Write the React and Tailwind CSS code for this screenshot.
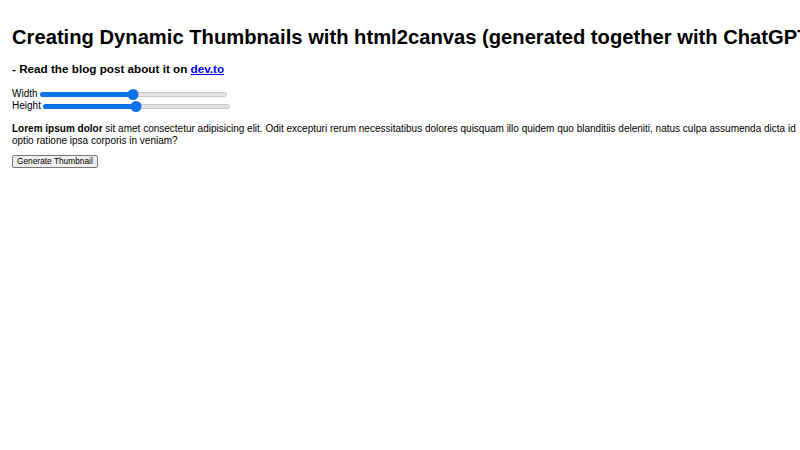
import React, { useState } from "react";

const Slider = ({ value, width }) => (
    <div className="relative h-[12px] flex items-center ml-[2px]" style={{ width }}>
        <div className="w-full h-[5px] rounded-full bg-[#e5e5e5] border border-[#c8c8c8]" />
        <div className="absolute left-0 h-[5px] rounded-full bg-[#0b72e7]" style={{ width: `${value}%` }} />
        <div
            className="absolute w-[11px] h-[11px] rounded-full bg-[#0b72e7] -translate-x-1/2"
            style={{ left: `${value}%` }}
        />
    </div>
);

export default function App() {
    const [width] = useState(50);
    const [height] = useState(50);

    return (
        <div className="min-h-screen bg-white text-black pl-[12px] pr-[2px] font-['Liberation_Sans',Arial,sans-serif] text-[10px] leading-[12px] overflow-hidden">
            <h1 className="pt-[25px] text-[20.2px] leading-[24px] font-bold whitespace-nowrap">
                Creating Dynamic Thumbnails with html2canvas (generated together with ChatGPT)
            </h1>
            <h3 className="mt-[12px] text-[11.7px] leading-[16px] font-bold">
                - Read the blog post about it on{" "}
                <a href="#" className="text-[#0000ee] underline">dev.to</a>
            </h3>

            <div className="mt-[11px]">
                <div className="flex items-center h-[12px]">
                    <span>Width</span>
                    <Slider value={width} width={187} />
                </div>
                <div className="flex items-center h-[12px]">
                    <span>Height</span>
                    <Slider value={height} width={187} />
                </div>
            </div>

            <p className="mt-[11px]">
                <b>Lorem ipsum dolor</b> sit amet consectetur adipisicing elit. Odit excepturi rerum necessitatibus dolores quisquam illo quidem quo blanditiis deleniti, natus culpa assumenda dicta id optio ratione ipsa corporis in veniam?
            </p>

            <button className="mt-[8px] px-[4px] h-[13px] leading-[11px] text-[8.33px] bg-[#efefef] border border-[#767676] rounded-[2px]">
                Generate Thumbnail
            </button>
        </div>
    );
}
